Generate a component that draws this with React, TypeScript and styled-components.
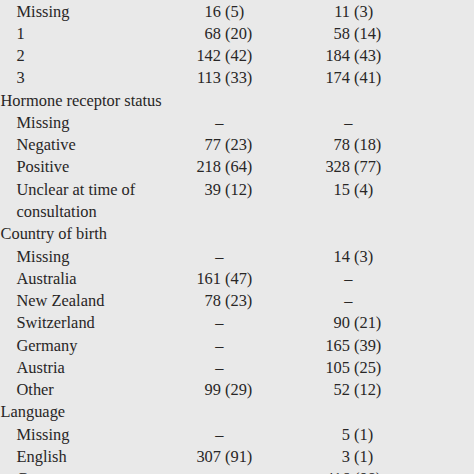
import React from "react";
import styled, { createGlobalStyle } from "styled-components";

const Global = createGlobalStyle`
  html, body {
    margin: 0;
    padding: 0;
    background: #e9e9e9;
  }
  body {
    width: 474px;
    height: 474px;
    overflow: hidden;
  }
`;

const Table = styled.div`
  display: flex;
  flex-direction: column;
  padding-top: 0.6px;
  font-family: "Liberation Serif", "Times New Roman", serif;
  font-size: 16.4px;
  line-height: 22.27px;
  color: #282626;
  background: #e9e9e9;
  width: 474px;
`;

const Heading = styled.div`
  padding-left: 0.5px;
  white-space: nowrap;
`;

const Row = styled.div`
  display: grid;
  grid-template-columns: 180px 41px 79px 50px 1fr;
  align-items: start;
`;

const Label = styled.div`
  padding-left: 16.5px;
`;

const Num = styled.div`
  text-align: right;
  white-space: nowrap;
`;

const Pct = styled.div`
  padding-left: 4px;
  white-space: nowrap;
`;

const Dash = styled.span`
  display: inline-block;
  margin-right: -2.5px;
`;

type Cell = [string, string] | null;

type Item =
  | { kind: "h"; label: string }
  | { kind: "r"; label: string; a: Cell; b: Cell };

const r = (label: string, a: Cell, b: Cell): Item => ({ kind: "r", label, a, b });
const h = (label: string): Item => ({ kind: "h", label });

const data: Item[] = [
  r("Missing", ["16", "(5)"], ["11", "(3)"]),
  r("1", ["68", "(20)"], ["58", "(14)"]),
  r("2", ["142", "(42)"], ["184", "(43)"]),
  r("3", ["113", "(33)"], ["174", "(41)"]),
  h("Hormone receptor status"),
  r("Missing", null, null),
  r("Negative", ["77", "(23)"], ["78", "(18)"]),
  r("Positive", ["218", "(64)"], ["328", "(77)"]),
  r("Unclear at time of consultation", ["39", "(12)"], ["15", "(4)"]),
  h("Country of birth"),
  r("Missing", null, ["14", "(3)"]),
  r("Australia", ["161", "(47)"], null),
  r("New Zealand", ["78", "(23)"], null),
  r("Switzerland", null, ["90", "(21)"]),
  r("Germany", null, ["165", "(39)"]),
  r("Austria", null, ["105", "(25)"]),
  r("Other", ["99", "(29)"], ["52", "(12)"]),
  h("Language"),
  r("Missing", null, ["5", "(1)"]),
  r("English", ["307", "(91)"], ["3", "(1)"]),
  r("German", null, ["416", "(98)"]),
];

const Value: React.FC<{ cell: Cell }> = ({ cell }) =>
  cell ? (
    <>
      <Num>{cell[0]}</Num>
      <Pct>{cell[1]}</Pct>
    </>
  ) : (
    <>
      <Num>
        <Dash>–</Dash>
      </Num>
      <Pct />
    </>
  );

export default function App() {
  return (
    <>
      <Global />
      <Table>
        {data.map((item, i) =>
          item.kind === "h" ? (
            <Heading key={i}>{item.label}</Heading>
          ) : (
            <Row key={i}>
              <Label>{item.label}</Label>
              <Value cell={item.a} />
              <Value cell={item.b} />
            </Row>
          )
        )}
      </Table>
    </>
  );
}
